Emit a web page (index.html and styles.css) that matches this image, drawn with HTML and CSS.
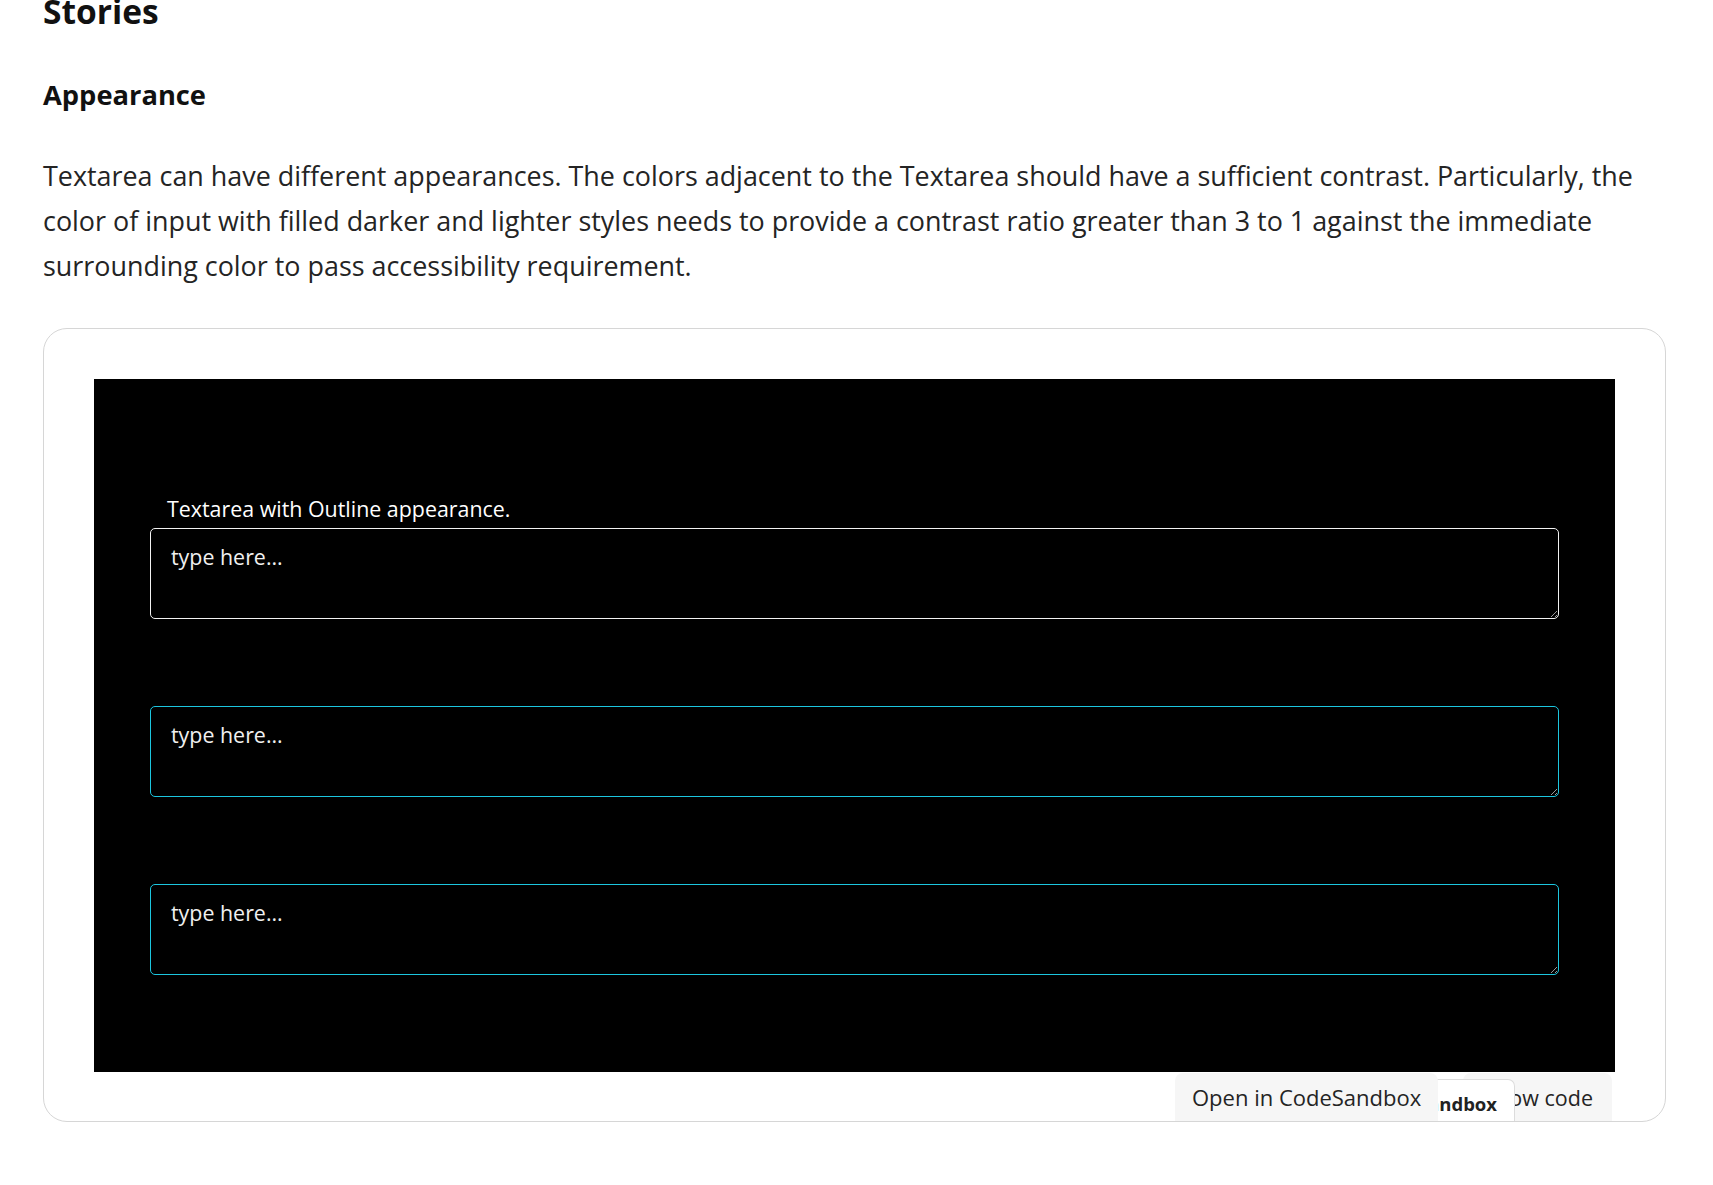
FILE: index.html
```html
<!DOCTYPE html>
<html lang="en">
<head>
<meta charset="utf-8">
<title>Textarea – Appearance</title>
<link rel="stylesheet" href="styles.css">
</head>
<body>
<main class="page">
  <h1 class="stories">Stories</h1>
  <h2 class="section-title">Appearance</h2>
  <p class="lead">Textarea can have different appearances. The colors adjacent to the Textarea should have a sufficient contrast. Particularly, the color of input with filled darker and lighter styles needs to provide a contrast ratio greater than 3 to 1 against the immediate surrounding color to pass accessibility requirement.</p>

  <section class="card">
    <div class="preview">
      <div class="field">
        <label class="field-label" for="ta1">Textarea with Outline appearance.</label>
        <textarea id="ta1" class="ta ta-outline" placeholder="type here..."></textarea>
      </div>
      <div class="field">
        <textarea class="ta ta-cyan" placeholder="type here..."></textarea>
      </div>
      <div class="field">
        <textarea class="ta ta-cyan" placeholder="type here..."></textarea>
      </div>
    </div>
    <div class="actions">
      <button class="btn btn-open" type="button">Open in CodeSandbox</button>
      <span class="tab"><span class="tab-text">Open in CodeSandbox</span></span>
      <button class="btn btn-show" type="button">Show code</button>
    </div>
  </section>
</main>
</body>
</html>
```
FILE: styles.css
```css
* { box-sizing: border-box; }

html, body {
  margin: 0;
  background: #ffffff;
}

body {
  font-family: "Open Sans", "Noto Sans", "Liberation Sans", sans-serif;
  color: #1f1f1f;
  overflow: hidden;
  height: 1185px;
}

.page {
  padding: 0 47px 0 43px;
}

.stories {
  margin: -11px 0 0 0;
  font-size: 33.5px;
  line-height: 44px;
  font-weight: 700;
  color: #111;
}

.section-title {
  margin: 44px 0 0 0;
  font-size: 27.3px;
  line-height: 36px;
  font-weight: 700;
  color: #111;
}

.lead {
  margin: 40px 0 0 0;
  font-size: 26.9px;
  line-height: 45px;
  font-weight: 400;
  color: #242424;
}

.card {
  position: relative;
  margin-top: 40px;
  border: 1px solid #d6d6d6;
  border-radius: 24px;
  padding: 50px 50px 49px 50px;
  background: #fff;
}

.preview {
  background: #000;
  padding: 116px 56px 97px 56px;
  display: flex;
  flex-direction: column;
  gap: 87px;
}

.field {
  display: flex;
  flex-direction: column;
}

.field-label {
  color: #fff;
  font-size: 21.4px;
  line-height: 28px;
  padding-left: 17px;
  margin-bottom: 5px;
}

.ta {
  display: block;
  width: 100%;
  height: 91px;
  background: #000;
  color: #fff;
  border-radius: 5px;
  padding: 15px 20px;
  font-family: "Open Sans", "Noto Sans", sans-serif;
  font-size: 21.4px;
  line-height: 26px;
  resize: vertical;
  outline: none;
}

.ta::placeholder {
  color: #f0f0f0;
  opacity: 1;
}

.ta-outline {
  border: 1px solid #f2f2f2;
}

.ta-cyan {
  border: 1px solid #1cc6df;
}

.actions {
  position: absolute;
  right: 53px;
  bottom: 0;
  display: flex;
  align-items: flex-end;
}

.btn {
  font-family: "Open Sans", "Noto Sans", sans-serif;
  font-size: 22px;
  color: #242424;
  background: #f6f6f6;
  border: none;
  height: 48px;
  border-radius: 8px 8px 0 0;
  white-space: nowrap;
  display: flex;
  align-items: center;
}

.btn-open {
  position: relative;
  z-index: 3;
  width: 263px;
  padding: 0 0 0 17px;
}

.tab {
  position: relative;
  z-index: 2;
  width: 97px;
  margin-left: -20px;
  height: 42px;
  background: #fff;
  border: 1px solid #dcdcdc;
  border-bottom: none;
  border-radius: 7px 7px 0 0;
  overflow: hidden;
  display: flex;
  justify-content: flex-end;
  align-items: center;
  padding-right: 17px;
}

.tab-text {
  white-space: nowrap;
  font-size: 18.5px;
  font-weight: 700;
  color: #222;
  padding-top: 5px;
}

.btn-show {
  position: relative;
  z-index: 1;
  width: 149px;
  margin-left: -52px;
  justify-content: flex-end;
  padding: 0 19px 0 0;
  font-size: 21.5px;
}
```
